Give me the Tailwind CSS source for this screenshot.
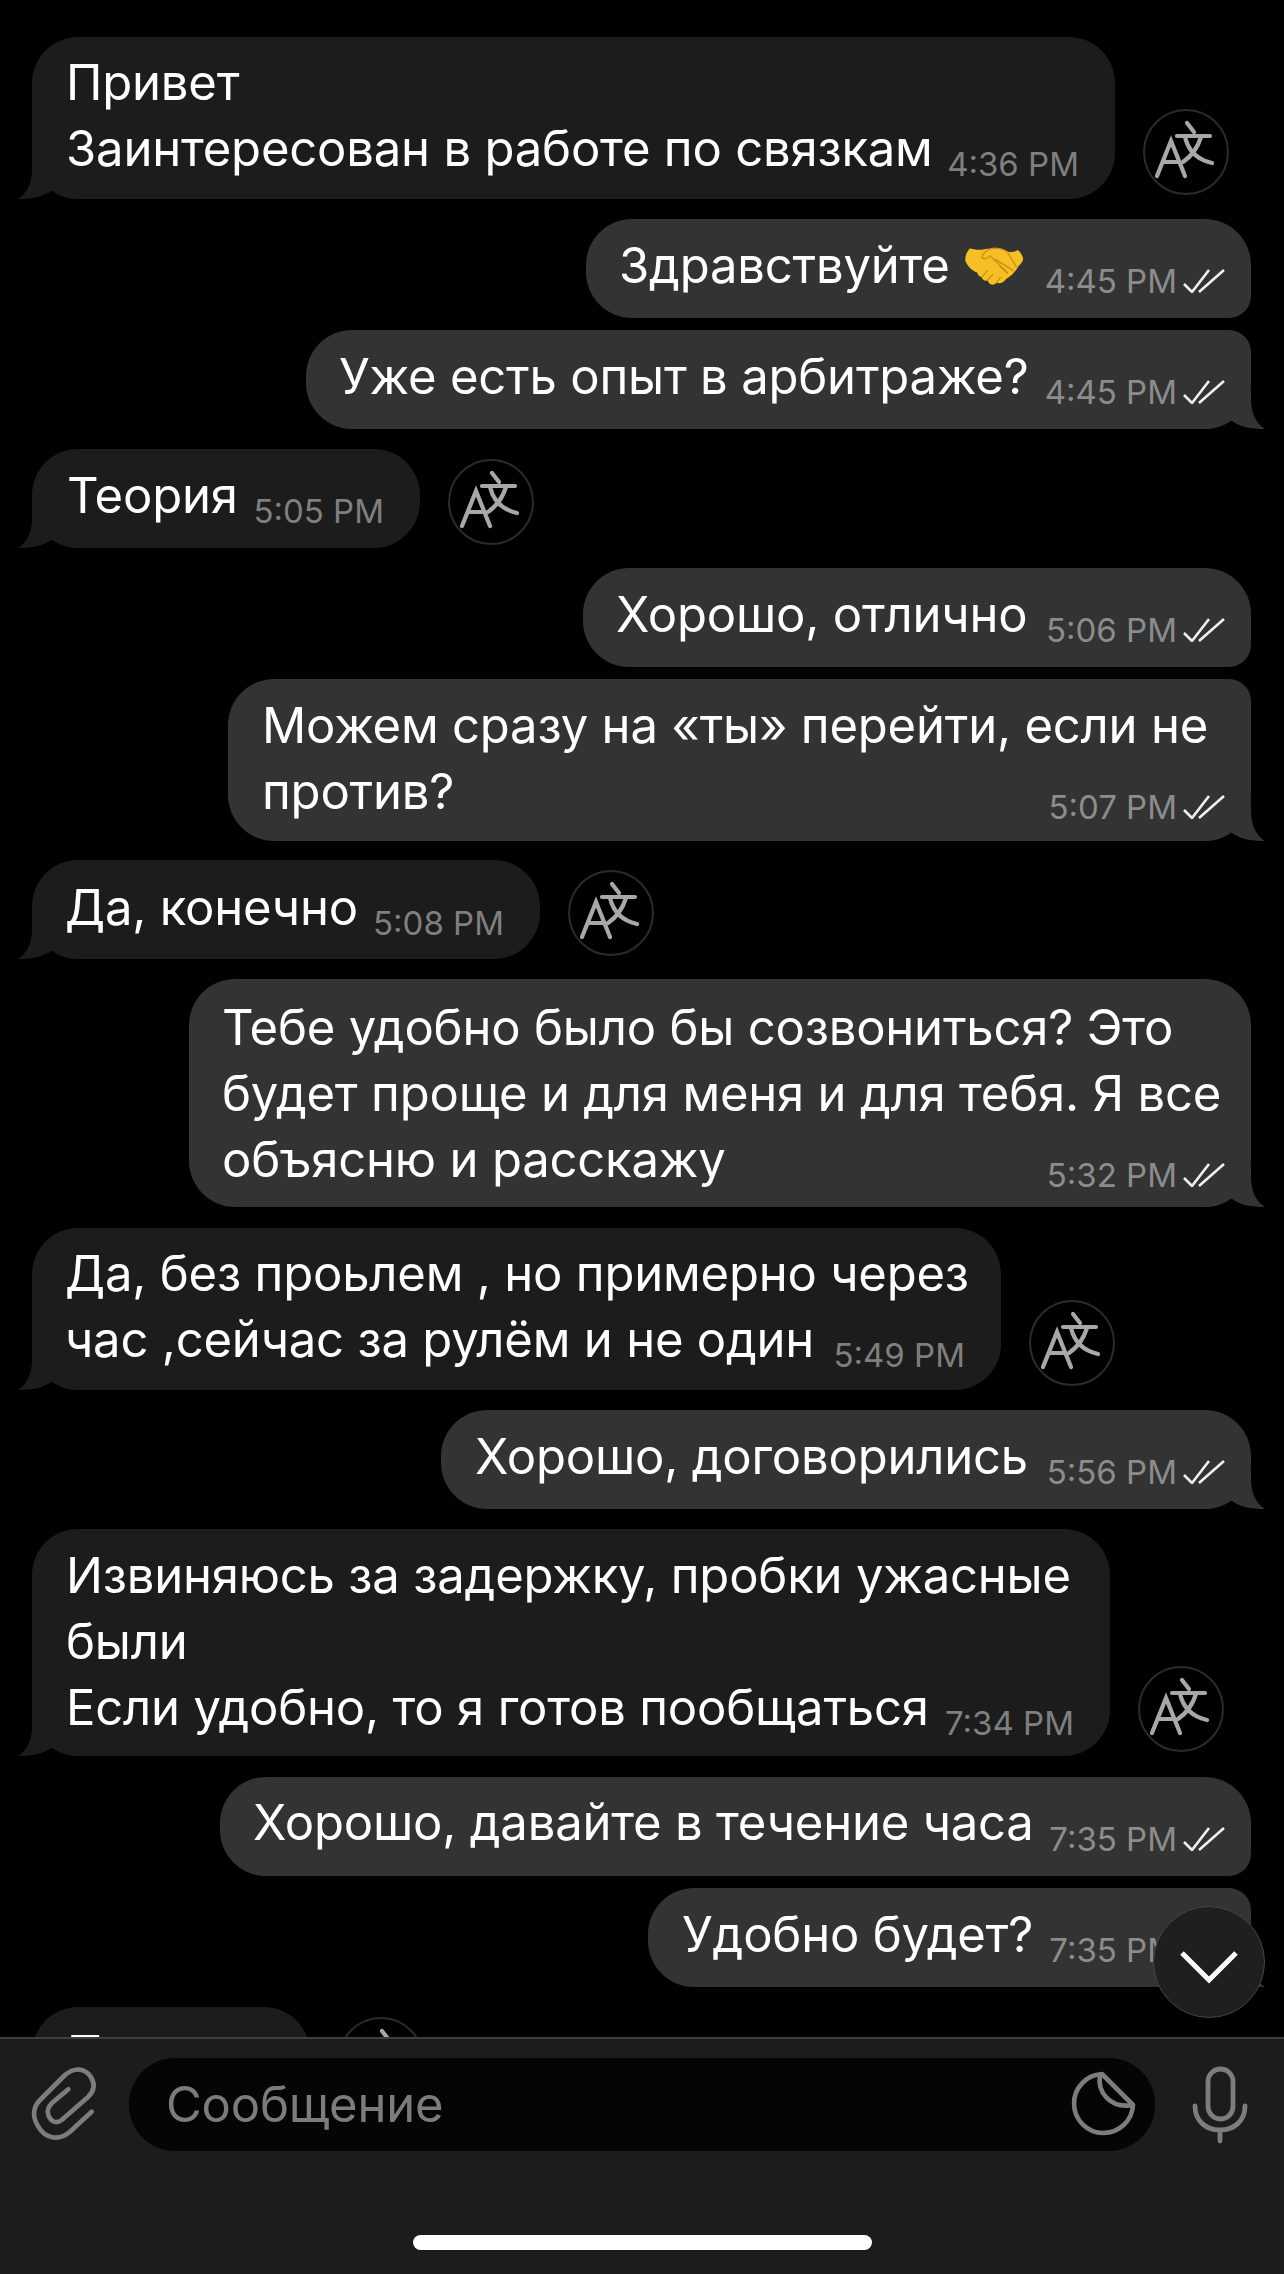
<!DOCTYPE html>
<html lang="ru">
<head>
  <meta charset="UTF-8" />
  <title>Чат</title>
  <script src="https://cdn.jsdelivr.net/npm/@tailwindcss/browser@4"></script>
</head>
<body class="bg-black font-['Inter','Noto_Sans',sans-serif] text-white">
  <div class="relative flex h-[2274px] w-[1284px] flex-col overflow-hidden">
    <!-- messages -->
    <div class="h-[2037px] shrink-0 overflow-hidden whitespace-nowrap pt-[37px] pr-[33px] pl-[32px] text-[49px] leading-[66px] tracking-[-0.2px]">

      <div class="flex items-end">
        <div class="relative h-[162px] w-[1083px] rounded-[46px] bg-[#1c1c1c] pt-[13px] pr-[36px] pl-[34px]">
          <div>Привет</div>
          <div class="relative z-10 flex items-baseline justify-between"><span>Заинтересован в работе по связкам</span><span class="translate-y-[10px] text-[33px] leading-none tracking-normal text-[#7f7f7f]">4:36 PM</span></div>
          <svg class="absolute bottom-0 left-[-14px]" width="60" height="40" viewBox="0 0 60 40"><path d="M14 0 V10 C14 22 10 34 0 40 C14 40 26 38 34 31 C40 36 50 40 60 40 V0 Z" fill="#1c1c1c" /></svg>
        </div>
        <div class="mb-[4px] ml-[28px] h-[86px] w-[86px] rounded-full border-2 border-[#2b2b2b]">
          <svg class="ml-[-2px] mt-[-2px]" width="86" height="86" viewBox="0 0 86 86" fill="none" stroke="#a8a8a8" stroke-width="4.2" stroke-linecap="round"><path d="M14 67 L28 32 L42 67 M21 53 H35 M44 14 L51 23 M34 27 H67 M42 28 Q47 49 69 54 M58 28 Q53 44 40 53" /></svg>
        </div>
      </div>

      <div class="mt-[20px] ml-auto h-[99px] w-[665px] rounded-tl-[46px] rounded-tr-[46px] rounded-br-[22px] rounded-bl-[46px] bg-[#333333] pt-[14px] pr-[26px] pl-[33px]">
        <div class="flex items-baseline justify-between"><span>Здравствуйте<svg class="ml-[15px] inline-block align-[-5px]" width="61" height="44" viewBox="40 30 190 135"><path d="M55 42 C45 55 38 70 42 84 C50 100 60 110 78 118 C80 128 88 132 92 132 C94 142 104 146 110 142 C116 158 130 160 138 150 C150 154 162 148 168 138 C186 128 200 112 206 98 C216 90 224 78 220 70 C216 60 210 52 204 48 C196 54 184 56 172 52 C160 44 146 40 130 42 C118 42 106 44 96 46 C82 48 68 46 55 42 Z" fill="#f6bf26" /><path d="M92 70 C100 52 116 44 130 42 C146 42 160 46 172 54 L200 100 M118 66 C108 76 98 78 92 70 M118 66 L172 118 M134 76 L190 112 M150 100 L172 120 M92 132 L110 112 M110 142 L126 124 M138 150 L150 134" fill="none" stroke="#cf8f12" stroke-width="4" stroke-linecap="round" /></svg></span><span class="flex translate-y-[10px] items-baseline text-[33px] leading-none tracking-normal text-[#8c8c8c]">4:45 PM<svg class="ml-[6px]" width="42" height="24" viewBox="0 0 42 24" fill="none" stroke="#f0f0f0" stroke-width="2.6"><path d="M1 15 L9 23 L26 1 M16 23 L41 1" /></svg></span></div>
      </div>

      <div class="relative mt-[12px] ml-auto h-[99px] w-[945px] rounded-tl-[46px] rounded-tr-[22px] rounded-br-[46px] rounded-bl-[46px] bg-[#333333] pt-[14px] pr-[26px] pl-[33px]">
        <div class="relative z-10 flex items-baseline justify-between"><span>Уже есть опыт в арбитраже?</span><span class="flex translate-y-[10px] items-baseline text-[33px] leading-none tracking-normal text-[#8c8c8c]">4:45 PM<svg class="ml-[6px]" width="42" height="24" viewBox="0 0 42 24" fill="none" stroke="#f0f0f0" stroke-width="2.6"><path d="M1 15 L9 23 L26 1 M16 23 L41 1" /></svg></span></div>
        <svg class="absolute right-[-14px] bottom-0 -scale-x-100" width="60" height="40" viewBox="0 0 60 40"><path d="M14 0 V10 C14 22 10 34 0 40 C14 40 26 38 34 31 C40 36 50 40 60 40 V0 Z" fill="#333333" /></svg>
      </div>

      <div class="mt-[20px] flex items-end">
        <div class="relative h-[99px] w-[388px] rounded-[46px] bg-[#1c1c1c] pt-[14px] pr-[36px] pl-[35px]">
          <div class="relative z-10 flex items-baseline justify-between"><span>Теория</span><span class="translate-y-[10px] text-[33px] leading-none tracking-normal text-[#7f7f7f]">5:05 PM</span></div>
          <svg class="absolute bottom-0 left-[-14px]" width="60" height="40" viewBox="0 0 60 40"><path d="M14 0 V10 C14 22 10 34 0 40 C14 40 26 38 34 31 C40 36 50 40 60 40 V0 Z" fill="#1c1c1c" /></svg>
        </div>
        <div class="mb-[3px] ml-[28px] h-[86px] w-[86px] rounded-full border-2 border-[#2b2b2b]">
          <svg class="ml-[-2px] mt-[-2px]" width="86" height="86" viewBox="0 0 86 86" fill="none" stroke="#a8a8a8" stroke-width="4.2" stroke-linecap="round"><path d="M14 67 L28 32 L42 67 M21 53 H35 M44 14 L51 23 M34 27 H67 M42 28 Q47 49 69 54 M58 28 Q53 44 40 53" /></svg>
        </div>
      </div>

      <div class="mt-[20px] ml-auto h-[99px] w-[668px] rounded-tl-[46px] rounded-tr-[46px] rounded-br-[22px] rounded-bl-[46px] bg-[#333333] pt-[14px] pr-[26px] pl-[33px]">
        <div class="flex items-baseline justify-between"><span>Хорошо, отлично</span><span class="flex translate-y-[10px] items-baseline text-[33px] leading-none tracking-normal text-[#8c8c8c]">5:06 PM<svg class="ml-[6px]" width="42" height="24" viewBox="0 0 42 24" fill="none" stroke="#f0f0f0" stroke-width="2.6"><path d="M1 15 L9 23 L26 1 M16 23 L41 1" /></svg></span></div>
      </div>

      <div class="relative mt-[12px] ml-auto h-[162px] w-[1023px] rounded-tl-[46px] rounded-tr-[22px] rounded-br-[46px] rounded-bl-[46px] bg-[#333333] pt-[14px] pr-[26px] pl-[34px]">
        <div>Можем сразу на «ты» перейти, если не</div>
        <div class="relative z-10 flex items-baseline justify-between"><span>против?</span><span class="flex translate-y-[10px] items-baseline text-[33px] leading-none tracking-normal text-[#8c8c8c]">5:07 PM<svg class="ml-[6px]" width="42" height="24" viewBox="0 0 42 24" fill="none" stroke="#f0f0f0" stroke-width="2.6"><path d="M1 15 L9 23 L26 1 M16 23 L41 1" /></svg></span></div>
        <svg class="absolute right-[-14px] bottom-0 -scale-x-100" width="60" height="40" viewBox="0 0 60 40"><path d="M14 0 V10 C14 22 10 34 0 40 C14 40 26 38 34 31 C40 36 50 40 60 40 V0 Z" fill="#333333" /></svg>
      </div>

      <div class="mt-[19px] flex items-end">
        <div class="relative h-[99px] w-[508px] rounded-[46px] bg-[#1c1c1c] pt-[15px] pr-[36px] pl-[33px]">
          <div class="relative z-10 flex items-baseline justify-between"><span>Да, конечно</span><span class="translate-y-[10px] text-[33px] leading-none tracking-normal text-[#7f7f7f]">5:08 PM</span></div>
          <svg class="absolute bottom-0 left-[-14px]" width="60" height="40" viewBox="0 0 60 40"><path d="M14 0 V10 C14 22 10 34 0 40 C14 40 26 38 34 31 C40 36 50 40 60 40 V0 Z" fill="#1c1c1c" /></svg>
        </div>
        <div class="mb-[3px] ml-[28px] h-[86px] w-[86px] rounded-full border-2 border-[#2b2b2b]">
          <svg class="ml-[-2px] mt-[-2px]" width="86" height="86" viewBox="0 0 86 86" fill="none" stroke="#a8a8a8" stroke-width="4.2" stroke-linecap="round"><path d="M14 67 L28 32 L42 67 M21 53 H35 M44 14 L51 23 M34 27 H67 M42 28 Q47 49 69 54 M58 28 Q53 44 40 53" /></svg>
        </div>
      </div>

      <div class="relative mt-[20px] ml-auto h-[228px] w-[1062px] rounded-[46px] bg-[#333333] pt-[16px] pr-[26px] pl-[33px]">
        <div>Тебе удобно было бы созвониться? Это</div>
        <div>будет проще и для меня и для тебя. Я все</div>
        <div class="relative z-10 flex items-baseline justify-between"><span>объясню и расскажу</span><span class="flex translate-y-[10px] items-baseline text-[33px] leading-none tracking-normal text-[#8c8c8c]">5:32 PM<svg class="ml-[6px]" width="42" height="24" viewBox="0 0 42 24" fill="none" stroke="#f0f0f0" stroke-width="2.6"><path d="M1 15 L9 23 L26 1 M16 23 L41 1" /></svg></span></div>
        <svg class="absolute right-[-14px] bottom-0 -scale-x-100" width="60" height="40" viewBox="0 0 60 40"><path d="M14 0 V10 C14 22 10 34 0 40 C14 40 26 38 34 31 C40 36 50 40 60 40 V0 Z" fill="#333333" /></svg>
      </div>

      <div class="mt-[21px] flex items-end">
        <div class="relative h-[162px] w-[969px] rounded-[46px] bg-[#1c1c1c] pt-[13px] pr-[36px] pl-[33px]">
          <div>Да, без проьлем , но примерно через</div>
          <div class="relative z-10 flex items-baseline justify-between"><span>час ,сейчас за рулём и не один</span><span class="translate-y-[10px] text-[33px] leading-none tracking-normal text-[#7f7f7f]">5:49 PM</span></div>
          <svg class="absolute bottom-0 left-[-14px]" width="60" height="40" viewBox="0 0 60 40"><path d="M14 0 V10 C14 22 10 34 0 40 C14 40 26 38 34 31 C40 36 50 40 60 40 V0 Z" fill="#1c1c1c" /></svg>
        </div>
        <div class="mb-[4px] ml-[28px] h-[86px] w-[86px] rounded-full border-2 border-[#2b2b2b]">
          <svg class="ml-[-2px] mt-[-2px]" width="86" height="86" viewBox="0 0 86 86" fill="none" stroke="#a8a8a8" stroke-width="4.2" stroke-linecap="round"><path d="M14 67 L28 32 L42 67 M21 53 H35 M44 14 L51 23 M34 27 H67 M42 28 Q47 49 69 54 M58 28 Q53 44 40 53" /></svg>
        </div>
      </div>

      <div class="relative mt-[20px] ml-auto h-[99px] w-[810px] rounded-[46px] bg-[#333333] pt-[14px] pr-[26px] pl-[34px]">
        <div class="relative z-10 flex items-baseline justify-between"><span>Хорошо, договорились</span><span class="flex translate-y-[10px] items-baseline text-[33px] leading-none tracking-normal text-[#8c8c8c]">5:56 PM<svg class="ml-[6px]" width="42" height="24" viewBox="0 0 42 24" fill="none" stroke="#f0f0f0" stroke-width="2.6"><path d="M1 15 L9 23 L26 1 M16 23 L41 1" /></svg></span></div>
        <svg class="absolute right-[-14px] bottom-0 -scale-x-100" width="60" height="40" viewBox="0 0 60 40"><path d="M14 0 V10 C14 22 10 34 0 40 C14 40 26 38 34 31 C40 36 50 40 60 40 V0 Z" fill="#333333" /></svg>
      </div>

      <div class="mt-[20px] flex items-end">
        <div class="relative h-[227px] w-[1078px] rounded-[46px] bg-[#1c1c1c] pt-[14px] pr-[36px] pl-[34px]">
          <div>Извиняюсь за задержку, пробки ужасные</div>
          <div>были</div>
          <div class="relative z-10 flex items-baseline justify-between"><span>Если удобно, то я готов пообщаться</span><span class="translate-y-[10px] text-[33px] leading-none tracking-normal text-[#7f7f7f]">7:34 PM</span></div>
          <svg class="absolute bottom-0 left-[-14px]" width="60" height="40" viewBox="0 0 60 40"><path d="M14 0 V10 C14 22 10 34 0 40 C14 40 26 38 34 31 C40 36 50 40 60 40 V0 Z" fill="#1c1c1c" /></svg>
        </div>
        <div class="mb-[4px] ml-[28px] h-[86px] w-[86px] rounded-full border-2 border-[#2b2b2b]">
          <svg class="ml-[-2px] mt-[-2px]" width="86" height="86" viewBox="0 0 86 86" fill="none" stroke="#a8a8a8" stroke-width="4.2" stroke-linecap="round"><path d="M14 67 L28 32 L42 67 M21 53 H35 M44 14 L51 23 M34 27 H67 M42 28 Q47 49 69 54 M58 28 Q53 44 40 53" /></svg>
        </div>
      </div>

      <div class="mt-[21px] ml-auto h-[99px] w-[1031px] rounded-tl-[46px] rounded-tr-[46px] rounded-br-[22px] rounded-bl-[46px] bg-[#333333] pt-[13px] pr-[26px] pl-[33px]">
        <div class="flex items-baseline justify-between"><span>Хорошо, давайте в течение часа</span><span class="flex translate-y-[11px] items-baseline text-[33px] leading-none tracking-normal text-[#8c8c8c]">7:35 PM<svg class="ml-[6px]" width="42" height="24" viewBox="0 0 42 24" fill="none" stroke="#f0f0f0" stroke-width="2.6"><path d="M1 15 L9 23 L26 1 M16 23 L41 1" /></svg></span></div>
      </div>

      <div class="relative mt-[12px] ml-auto h-[99px] w-[603px] rounded-tl-[46px] rounded-tr-[22px] rounded-br-[46px] rounded-bl-[46px] bg-[#333333] pt-[14px] pr-[26px] pl-[34px]">
        <div class="relative z-10 flex items-baseline justify-between"><span>Удобно будет?</span><span class="flex translate-y-[10px] items-baseline text-[33px] leading-none tracking-normal text-[#8c8c8c]">7:35 PM<svg class="ml-[6px]" width="42" height="24" viewBox="0 0 42 24" fill="none" stroke="#f0f0f0" stroke-width="2.6"><path d="M1 15 L9 23 L26 1 M16 23 L41 1" /></svg></span></div>
        <svg class="absolute right-[-14px] bottom-0 -scale-x-100" width="60" height="40" viewBox="0 0 60 40"><path d="M14 0 V10 C14 22 10 34 0 40 C14 40 26 38 34 31 C40 36 50 40 60 40 V0 Z" fill="#333333" /></svg>
      </div>

      <div class="mt-[20px] flex items-end">
        <div class="h-[99px] w-[278px] rounded-[46px] bg-[#1c1c1c] pt-[14px] pl-[35px]">Понял</div>
        <div class="mb-[3px] ml-[28px] h-[86px] w-[86px] rounded-full border-2 border-[#2b2b2b]">
          <svg class="ml-[-2px] mt-[-2px]" width="86" height="86" viewBox="0 0 86 86" fill="none" stroke="#a8a8a8" stroke-width="4.2" stroke-linecap="round"><path d="M14 67 L28 32 L42 67 M21 53 H35 M44 14 L51 23 M34 27 H67 M42 28 Q47 49 69 54 M58 28 Q53 44 40 53" /></svg>
        </div>
      </div>
    </div>

    <!-- composer -->
    <div class="relative z-20 flex-1 border-t-2 border-[#3f3f3f] bg-[#1c1c1c] pt-[19px]">
      <div class="flex items-center">
        <svg class="my-[-4px] ml-[20px]" width="90" height="100" viewBox="0 0 270 300" fill="none" stroke="#7d7d7d" stroke-width="14" stroke-linecap="round" stroke-linejoin="round"><path d="M215 170 L150 230 C115 260 75 250 55 215 C35 185 40 155 60 135 L135 60 C165 35 195 40 212 65 C228 90 220 110 205 125 L125 195 C105 210 90 195 85 180 C80 165 85 155 95 145 L145 103" /></svg>
        <div class="ml-[19px] flex h-[93px] w-[1026px] items-center justify-between rounded-[46px] bg-[#050505] pr-[15px] pl-[37px] text-[49px] tracking-[-0.2px] text-[#7c7c7c]">
          <span>Сообщение</span>
          <svg width="70" height="70" viewBox="0 0 70 70" fill="none" stroke="#7d7d7d" stroke-width="4.6" stroke-linecap="round" stroke-linejoin="round"><path d="M32 4 A29.5 29.5 0 1 0 63 35 L32 4 Z M30 5 C27 22 40 39 63 35" /></svg>
        </div>
        <svg class="ml-[35px]" width="60" height="80" viewBox="0 0 60 80" fill="none" stroke="#7d7d7d" stroke-width="4.8" stroke-linecap="round"><rect x="18" y="4" width="25" height="50" rx="12.5" /><path d="M5 41 C5 56 16 65 30 65 C44 65 55 56 55 41 M30 65 V76" /></svg>
      </div>
    </div>

    <!-- over the list -->
    <div class="absolute top-[1906px] left-[1153px] z-20 flex h-[112px] w-[112px] items-center justify-center rounded-full border border-[#454545] bg-[#1f1f1f]">
      <svg class="mt-[10px]" width="60" height="34" viewBox="0 0 60 34" fill="none" stroke="#ffffff" stroke-width="5"><path d="M3 3 L30 30 L57 3" /></svg>
    </div>
    <div class="absolute bottom-[24px] left-[413px] z-30 h-[15px] w-[459px] rounded-full bg-white"></div>
  </div>
</body>
</html>
